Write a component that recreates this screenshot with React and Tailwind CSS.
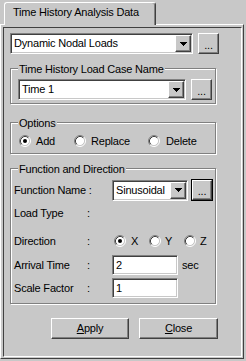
const sunken =
  "border border-t-[#808080] border-l-[#808080] border-r-white border-b-white shadow-[inset_1px_1px_0_#404040,inset_-1px_-1px_0_#c8c8c8]";
const raised =
  "border border-t-white border-l-white border-r-[#404040] border-b-[#404040] shadow-[inset_-1px_-1px_0_#808080]";
const etched =
  "relative border border-[#808080] shadow-[inset_1px_1px_0_#fff,1px_1px_0_#fff]";

function Arrow() {
  return (
    <div className={`flex w-[16px] h-full items-center justify-center bg-[#c8c8c8] ${raised}`}>
      <svg width="7" height="4" viewBox="0 0 7 4" shapeRendering="crispEdges">
        <polygon points="0,0 7,0 3.5,4" fill="#000" />
      </svg>
    </div>
  );
}

function Combo({ value, className }) {
  return (
    <div className={`flex h-[21px] bg-white p-[1px] ${sunken} ${className}`}>
      <span className="flex-1 flex items-center pl-[2px]">{value}</span>
      <Arrow />
    </div>
  );
}

function Dots({ className = "" }) {
  return (
    <div className={`flex items-center justify-center bg-[#c8c8c8] pt-[3px] ${raised} ${className}`}>
      ...
    </div>
  );
}

function Radio({ checked }) {
  return (
    <svg width="12" height="12" viewBox="0 0 12 12" className="shrink-0">
      <circle cx="6" cy="6" r="4.5" fill="#fff" />
      <path d="M2.11 9.89A5.5 5.5 0 0 1 9.89 2.11" fill="none" stroke="#808080" />
      <path d="M9.89 2.11A5.5 5.5 0 0 1 2.11 9.89" fill="none" stroke="#fff" />
      <path d="M2.82 9.18A4.5 4.5 0 0 1 9.18 2.82" fill="none" stroke="#404040" />
      <path d="M9.18 2.82A4.5 4.5 0 0 1 2.82 9.18" fill="none" stroke="#c8c8c8" />
      {checked && <circle cx="6" cy="6" r="2" fill="#000" />}
    </svg>
  );
}

function Option({ label, checked, className = "", gap = "gap-[5px]" }) {
  return (
    <div className={`flex items-center ${gap} ${className}`}>
      <Radio checked={checked} />
      <span>{label}</span>
    </div>
  );
}

function Field({ label, children, className = "" }) {
  return (
    <div className={`flex items-center ${className}`}>
      <div className="flex w-[98px] shrink-0">
        <span className="w-[73px]">{label}</span>
        <span>:</span>
      </div>
      {children}
    </div>
  );
}

function TextBox({ value }) {
  return (
    <div className={`flex items-center h-[20px] w-[66px] bg-white pl-[3px] ${sunken}`}>{value}</div>
  );
}

export default function App() {
  return (
    <div className="w-[246px] h-[361px] overflow-hidden bg-[#c8c8c8] font-['Liberation_Sans',Arial,sans-serif] text-[11px] leading-[13px] tracking-[-0.2px] text-black">
      {/* Tab strip */}
      <div className="flex pl-[4px] pt-[2px]">
        <div className="relative z-10 -mb-px h-[23px] w-[152px] rounded-t-[3px] border-x border-t border-t-white border-l-white border-r-[#404040] bg-[#c8c8c8] pl-[8px] pt-[3px] shadow-[inset_-1px_0_0_#808080]">
          Time History Analysis Data
        </div>
      </div>

      {/* Tab page */}
      <div className="h-[335px] w-[244px] border border-t-white border-l-white border-r-[#404040] border-b-[#404040] pt-[2px] pl-[2px] pr-[1px] pb-[1px]">
        <div className="flex h-full flex-col border border-t-[#404040] border-l-[#404040] border-r-white border-b-white pl-[6px] pt-[5px]">
          {/* Load type */}
          <div className="flex h-[21px] gap-[5px]">
            <Combo className="w-[183px]" value="Dynamic Nodal Loads" />
            <Dots className="w-[21px] h-[21px]" />
          </div>

          {/* Load case name */}
          <div className={`${etched} mt-[14px] h-[36px] w-[206px] pl-[7px] pt-[10px]`}>
            <span className="absolute left-[7px] -top-[6px] bg-[#c8c8c8] px-[1px]">Time History Load Case Name</span>
            <div className="flex gap-[5px]">
              <Combo className="w-[168px]" value="Time 1" />
              <Dots className="w-[21px] h-[21px]" />
            </div>
          </div>

          {/* Options */}
          <div className={`${etched} mt-[18px] h-[32px] w-[206px] pl-[8px] pt-[11px]`}>
            <span className="absolute left-[7px] -top-[6px] bg-[#c8c8c8] px-[1px]">Options</span>
            <div className="flex h-[14px] items-center">
              <Option label="Add" checked className="w-[55px]" />
              <Option label="Replace" className="w-[74px]" />
              <Option label="Delete" gap="gap-[6px]" />
            </div>
          </div>

          {/* Function and direction */}
          <div className={`${etched} mt-[14px] flex h-[136px] w-[206px] flex-col pl-[3px] pt-[10px]`}>
            <span className="absolute left-[7px] -top-[6px] bg-[#c8c8c8] px-[1px]">Function and Direction</span>

            <div className="flex h-[22px] items-center">
              <span className="w-[98px] shrink-0">Function Name :</span>
              <Combo className="w-[76px]" value="Sinusoidal" />
              <div className="ml-[3px] h-[22px] w-[22px] border border-black">
                <Dots className="h-full w-full" />
              </div>
            </div>

            <Field label="Load Type" className="mt-[1px] h-[22px]" />

            <Field label="Direction" className="mt-[6px] h-[22px]">
              <div className="ml-[2px] flex items-center">
                <Option label="X" checked className="w-[35px]" />
                <Option label="Y" gap="gap-[4px]" className="w-[35px]" />
                <Option label="Z" gap="gap-[4px]" />
              </div>
            </Field>

            <Field label="Arrival Time" className="mt-[3px] h-[20px]">
              <TextBox value="2" />
              <span className="ml-[4px]">sec</span>
            </Field>

            <Field label="Scale Factor" className="mt-[3px] h-[20px]">
              <TextBox value="1" />
            </Field>
          </div>

          {/* Buttons */}
          <div className="mt-[14px] flex gap-[10px] pl-[41px]">
            <button className={`h-[21px] w-[78px] bg-[#c8c8c8] ${raised}`}>
              <span className="underline">A</span>pply
            </button>
            <button className={`h-[21px] w-[79px] bg-[#c8c8c8] ${raised}`}>
              <span className="underline">C</span>lose
            </button>
          </div>
        </div>
      </div>
    </div>
  );
}
